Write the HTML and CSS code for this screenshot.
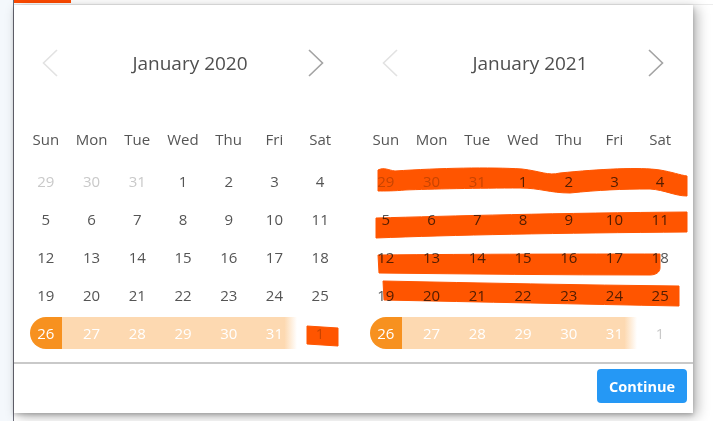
FILE: index.html
```html
<!DOCTYPE html>
<html>
<head>
<meta charset="utf-8">
<link rel="stylesheet" href="styles.css">
</head>
<body>
<div class="app">
  <div class="side"></div>
  <div class="main">
    <div class="topbar"><div class="tab-indicator"></div></div>
    <div class="panel">
      <div class="calendars">
        <div class="cal">
          <div class="cal-head">
            <svg class="arrow arrow-off" width="16" height="28" viewBox="0 0 16 28"><path d="M15 1 L1.5 14 L15 27" fill="none" stroke="currentColor" stroke-width="1.6"/></svg>
            <div class="cal-title">January 2020</div>
            <svg class="arrow arrow-on" width="16" height="28" viewBox="0 0 16 28"><path d="M1 1 L14.5 14 L1 27" fill="none" stroke="currentColor" stroke-width="1.6"/></svg>
          </div>
          <div class="weekdays"><span>Sun</span><span>Mon</span><span>Tue</span><span>Wed</span><span>Thu</span><span>Fri</span><span>Sat</span></div>
          <div class="days">
            <span class="muted">29</span><span class="muted">30</span><span class="muted">31</span><span>1</span><span>2</span><span>3</span><span>4</span>
            <span>5</span><span>6</span><span>7</span><span>8</span><span>9</span><span>10</span><span>11</span>
            <span>12</span><span>13</span><span>14</span><span>15</span><span>16</span><span>17</span><span>18</span>
            <span>19</span><span>20</span><span>21</span><span>22</span><span>23</span><span>24</span><span>25</span>
            <span class="range start"><b class="dot">26</b></span><span class="range">27</span><span class="range">28</span><span class="range">29</span><span class="range">30</span><span class="range end">31</span><span class="muted">1</span>
          </div>
        </div>
        <div class="cal">
          <div class="cal-head">
            <svg class="arrow arrow-off" width="16" height="28" viewBox="0 0 16 28"><path d="M15 1 L1.5 14 L15 27" fill="none" stroke="currentColor" stroke-width="1.6"/></svg>
            <div class="cal-title">January 2021</div>
            <svg class="arrow arrow-on" width="16" height="28" viewBox="0 0 16 28"><path d="M1 1 L14.5 14 L1 27" fill="none" stroke="currentColor" stroke-width="1.6"/></svg>
          </div>
          <div class="weekdays"><span>Sun</span><span>Mon</span><span>Tue</span><span>Wed</span><span>Thu</span><span>Fri</span><span>Sat</span></div>
          <div class="days">
            <span class="muted">29</span><span class="muted">30</span><span class="muted">31</span><span>1</span><span>2</span><span>3</span><span>4</span>
            <span>5</span><span>6</span><span>7</span><span>8</span><span>9</span><span>10</span><span>11</span>
            <span>12</span><span>13</span><span>14</span><span>15</span><span>16</span><span>17</span><span>18</span>
            <span>19</span><span>20</span><span>21</span><span>22</span><span>23</span><span>24</span><span>25</span>
            <span class="range start"><b class="dot">26</b></span><span class="range">27</span><span class="range">28</span><span class="range">29</span><span class="range">30</span><span class="range end">31</span><span class="muted">1</span>
          </div>
        </div>
      </div>
      <div class="footer"><button class="btn-continue">Continue</button></div>
    </div>
  </div>
  <svg class="scribbles" width="713" height="421" viewBox="0 0 713 421">
    <g fill="#ff5500" stroke="#ff5500" stroke-linejoin="round">
      <path d="M378 170 C 384 167, 388 170, 395 171 C 440 168, 490 167, 522 169 C 540 171, 548 176, 560 173 C 600 169, 640 167, 660 170 C 672 172, 680 175, 687 176 L 687 196 C 675 196, 665 190, 650 189 C 620 189, 600 190, 570 193 C 550 193, 540 188, 520 188 C 480 188, 430 189, 405 190 C 395 191, 385 191, 378 191 Z" stroke-width="1"/>
      <path d="M376 218 C 450 216, 560 213, 687 212 L 687 232 C 560 233, 450 235, 376 238 Z" stroke-width="1"/>
      <path d="M378 255 C 480 254, 580 254, 660 254 L 660 268 C 660 272, 656 275, 650 275 C 560 275, 470 274, 379 273 Z" stroke-width="1"/>
      <path d="M383 281 C 480 283, 580 285, 679 286 L 679 306 C 580 304, 480 302, 384 300 Z" stroke-width="1"/>
      <path d="M307 326 L 338 328 L 338 346 L 307 344 Z" stroke-width="1"/>
    </g>
  </svg>
</div>
</body>
</html>
```

FILE: styles.css
```css
* { box-sizing: border-box; }
html, body { margin: 0; padding: 0; }
body {
  width: 713px;
  height: 421px;
  overflow: hidden;
  background: #ffffff;
  font-family: "Open Sans", "Noto Sans", sans-serif;
  color: #555555;
}
.app {
  position: relative;
  display: flex;
  width: 713px;
  height: 421px;
}
.side {
  width: 13px;
  flex: none;
  background: #f4f8fc;
}
.main {
  flex: 1;
  border-left: 1px solid #6c6c78;
  display: flex;
  flex-direction: column;
}
.topbar {
  height: 5px;
  border-bottom: 1px solid #ececec;
  flex: none;
}
.tab-indicator {
  width: 57px;
  height: 3px;
  background: #fe4a00;
}
.panel {
  width: 679px;
  background: #ffffff;
  box-shadow: 4px 3px 12px rgba(0, 0, 0, 0.3), 0 2px 4px rgba(0, 0, 0, 0.2);
  position: relative;
}
.calendars {
  display: flex;
  gap: 20px;
  padding: 0 10px 0 9px;
}
.cal {
  width: 320px;
  padding-top: 44px;
}
.cal-head {
  height: 28px;
  display: flex;
  align-items: center;
  justify-content: space-between;
  padding: 0 19px;
}
.arrow { display: block; }
.arrow-off { color: #e2e2e2; }
.arrow-on { color: #a3a3a3; }
.cal-title {
  font-size: 19px;
  line-height: 28px;
  color: #4f4f4f;
  padding-left: 14px;
}
.weekdays {
  margin-top: 52px;
  display: grid;
  grid-template-columns: repeat(7, 1fr);
  font-size: 15px;
  line-height: 20px;
  text-align: center;
  color: #555555;
}
.days {
  margin-top: 16px;
  display: grid;
  grid-template-columns: repeat(7, 1fr);
  row-gap: 6px;
  font-size: 15px;
  text-align: center;
}
.days span {
  height: 32px;
  line-height: 32px;
  color: #555555;
}
.days span.muted { color: #c9c9c9; }
.days span.range {
  background: #fdd9b1;
  color: #ffffff;
}
.days span.start {
  background: linear-gradient(to right, transparent 50%, #fdd9b1 50%);
  display: flex;
  justify-content: center;
}
.days span.end {
  background: linear-gradient(to right, #fdd9b1 0%, #fdd9b1 72%, rgba(253, 217, 177, 0) 100%);
}
.dot {
  display: block;
  width: 32px;
  height: 32px;
  border-radius: 16px 0 0 16px;
  background: #f7911f;
  color: #ffffff;
  font-weight: 400;
}
.footer {
  margin-top: 13px;
  border-top: 2px solid #c9c9c9;
  padding: 5px 6px 10px;
  display: flex;
  justify-content: flex-end;
}
.btn-continue {
  width: 90px;
  height: 34px;
  border: none;
  border-radius: 4px;
  background: #2598f5;
  color: #ffffff;
  font-family: "Open Sans", "Noto Sans", sans-serif;
  font-weight: 700;
  font-size: 14.5px;
  padding: 0;
}
.scribbles {
  position: absolute;
  left: 0;
  top: 0;
  pointer-events: none;
  mix-blend-mode: multiply;
}
```
